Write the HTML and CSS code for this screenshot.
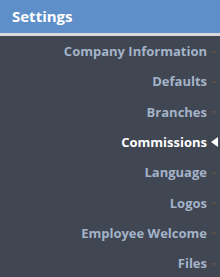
FILE: index.html
```html
<!DOCTYPE html>
<html>
<head>
<meta charset="utf-8">
<link rel="stylesheet" href="styles.css">
</head>
<body>
<div class="panel">
  <div class="header">Settings</div>
  <ul class="menu">
    <li class="item"><span class="label">Company Information</span><span class="caret"></span></li>
    <li class="item"><span class="label">Defaults</span><span class="caret"></span></li>
    <li class="item"><span class="label">Branches</span><span class="caret"></span></li>
    <li class="item active"><span class="label">Commissions</span><span class="caret"></span></li>
    <li class="item"><span class="label">Language</span><span class="caret"></span></li>
    <li class="item"><span class="label">Logos</span><span class="caret"></span></li>
    <li class="item"><span class="label">Employee Welcome</span><span class="caret"></span></li>
    <li class="item"><span class="label">Files</span><span class="caret"></span></li>
  </ul>
</div>
</body>
</html>
```
FILE: styles.css
```css
html, body {
  margin: 0;
  padding: 0;
  background: #404652;
}
.panel {
  width: 220px;
  height: 277px;
  overflow: hidden;
  font-family: "Open Sans", "Liberation Sans", sans-serif;
  font-weight: 700;
}
.header {
  background: #5f8fc8;
  color: #fff;
  font-size: 15px;
  line-height: 33px;
  height: 33px;
  padding-left: 12px;
  border-bottom: 3px solid #d9d9d9;
}
.menu {
  list-style: none;
  margin: 0;
  padding: 0;
}
.item {
  display: flex;
  justify-content: flex-end;
  align-items: center;
  height: 30.3px;
  font-size: 13px;
  color: #a4b3c8;
}
.item.active {
  color: #ffffff;
}
.caret {
  width: 0;
  height: 0;
  margin-left: 4px;
  margin-right: 3px;
  margin-top: 2px;
  border-left: 3px solid transparent;
  border-right: 3px solid transparent;
  border-top: 3px solid #5a5049;
}
.item.active .caret {
  margin-left: 4px;
  margin-right: 2px;
  margin-top: 0;
  border-top: 5px solid transparent;
  border-bottom: 5px solid transparent;
  border-right: 7px solid #ffffff;
  border-left: 0;
}
```
